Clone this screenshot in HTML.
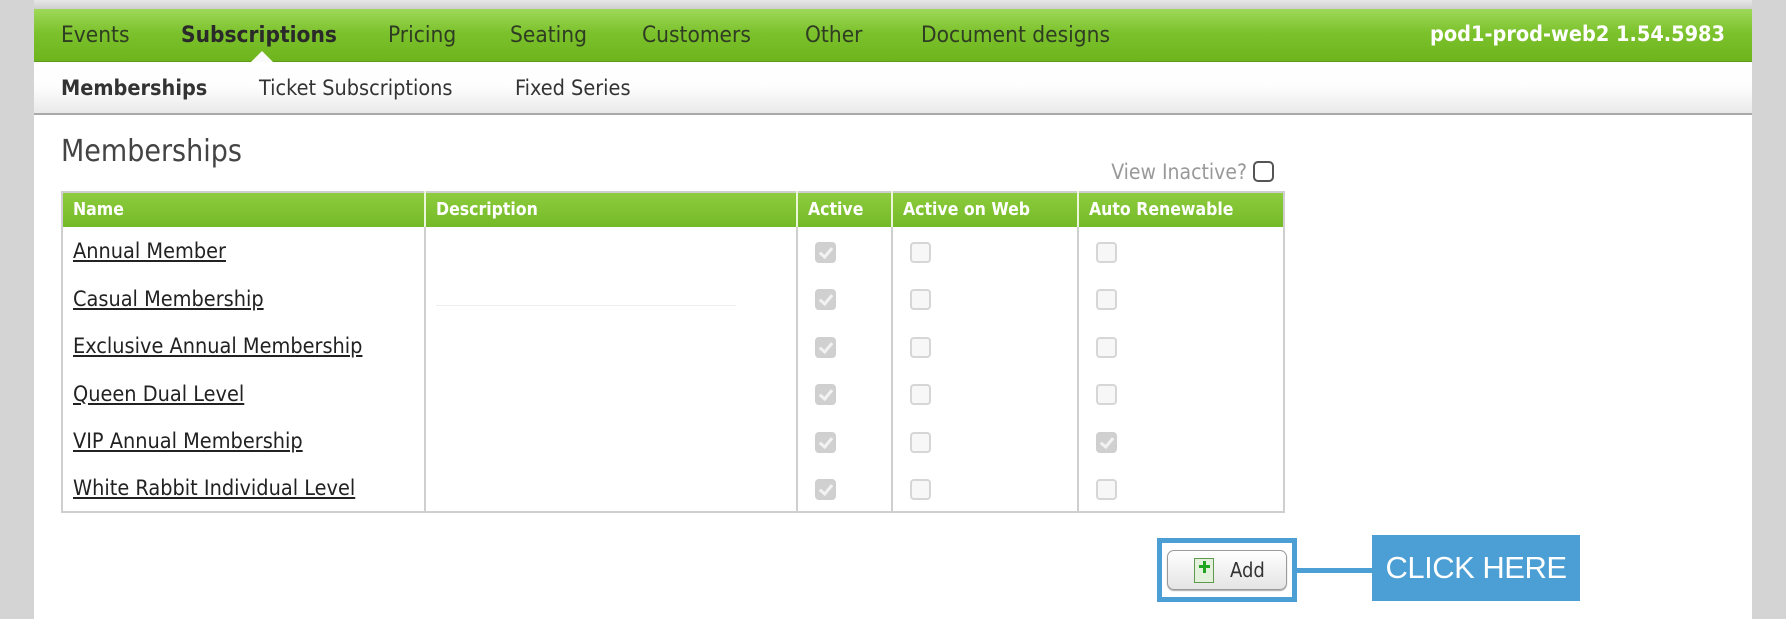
<!DOCTYPE html>
<html><head><meta charset="utf-8"><style>
*{margin:0;padding:0;box-sizing:border-box}
body{width:1786px;height:619px;overflow:hidden;background:#d4d4d4;font-family:"DejaVu Sans Condensed","Liberation Sans Narrow","Liberation Sans",sans-serif;position:relative}
.page{position:absolute;left:34px;top:0;width:1718px;height:619px;background:#fff}
.topbar{position:absolute;left:0;top:0;width:1718px;height:9px;background:linear-gradient(#e6e6e6,#cfcfcf)}
.nav{position:absolute;left:0;top:9px;width:1718px;height:53px;background:linear-gradient(#9fd85a,#7cc22c 45%,#6db41d);border-bottom:1px solid #5e9a1c}
.nav span{position:absolute;top:0;line-height:52px;font-size:22.5px;color:#2f3d23}
.nav b{position:absolute;top:0;line-height:52px;font-size:22.5px;color:#2a2a2a}
.nav .r{color:#fff;font-weight:bold;font-size:21.5px}
.tri{position:absolute;left:217px;top:51px;width:0;height:0;border-left:11px solid transparent;border-right:11px solid transparent;border-bottom:11px solid #fafafa}
.sub{position:absolute;left:0;top:62px;width:1718px;height:53px;background:linear-gradient(#fff,#fdfdfd 50%,#e9e9e9);border-bottom:2px solid #a9a9a9}
.sub span{position:absolute;top:0;line-height:54px;font-size:21.5px;color:#333}
h1{position:absolute;left:27px;top:135px;font-weight:normal;font-size:30px;color:#444;line-height:34px}
.vi{position:absolute;right:505px;top:160px;white-space:nowrap;font-size:21px;color:#999;line-height:24px}
.cbx{position:absolute;width:21px;height:21px;border:2px solid #555;border-radius:5px;background:#fff}
table{position:absolute;left:27px;top:191px;width:1224px;border-collapse:collapse;border:2px solid #cfcfcf}
th{height:35px;background:linear-gradient(#8dcc3e,#74b928);color:#fff;font-size:17.5px;text-align:left;padding-left:10px;border-left:2px solid #eaf5d9}
td{height:47.5px;border-left:2px solid #cfcfcf;font-size:21.5px;padding-left:10px;padding-top:2px}
td a{color:#222;text-decoration:underline}
.c{display:inline-block;width:21px;height:21px;border:2px solid #d6d6d6;border-radius:4px;background:#f7f7f7;vertical-align:middle;position:relative;margin-left:7px}
.c.k{background:#d0d0d0;border-color:#cfcfcf}
.c.k:after{content:"";position:absolute;left:5px;top:1px;width:5px;height:10px;border-right:3px solid #f2f2f2;border-bottom:3px solid #f2f2f2;transform:rotate(40deg)}
.box{position:absolute;left:1123px;top:538px;width:140px;height:64px;border:5px solid #4b9fd5}
.btn{position:absolute;left:5px;top:7px;width:120px;height:40px;border:1px solid #9a9a9a;border-radius:7px;background:linear-gradient(#fff,#e4e4e4);box-shadow:0 1px 1px #aaa;font-size:20px;color:#333;line-height:38px;padding-left:62px}
.doc{position:absolute;left:26px;top:7px;width:20px;height:25px;background:#e3f1dc;border:1px solid #5f9a4c}
.doc:before{content:"";position:absolute;left:8px;top:2px;width:3px;height:12px;background:#1fa51f}
.doc:after{content:"";position:absolute;left:4px;top:6px;width:11px;height:3px;background:#1fa51f}
.line{position:absolute;left:1263px;top:568px;width:75px;height:5px;background:#4b9fd5}
.ch{position:absolute;left:1338px;top:535px;width:208px;height:66px;background:#4b9fd5;color:#fff;font-size:31px;line-height:66px;text-align:center;font-family:"Liberation Sans",sans-serif;letter-spacing:-0.5px}
</style></head><body>
<div class="page">
<div class="topbar"></div>
<div class="nav">
<span style="left:27px">Events</span>
<b style="left:147px">Subscriptions</b>
<span style="left:354px">Pricing</span>
<span style="left:476px">Seating</span>
<span style="left:608px">Customers</span>
<span style="left:771px">Other</span>
<span style="left:887px">Document designs</span>
<span class="r" style="left:1396px">pod1-prod-web2 1.54.5983</span>
</div>
<div class="sub">
<span style="left:27px;font-weight:bold">Memberships</span>
<span style="left:225px">Ticket Subscriptions</span>
<span style="left:481px">Fixed Series</span>
</div>
<div class="tri"></div>
<h1>Memberships</h1>
<div class="vi">View Inactive?</div>
<div class="cbx" style="left:1219px;top:161px"></div>
<table>
<tr><th style="width:363px;border-left:none">Name</th><th style="width:372px">Description</th><th style="width:95px">Active</th><th style="width:186px">Active on Web</th><th>Auto Renewable</th></tr>
<tr><td style="border-left:none"><a>Annual Member</a></td><td></td><td><i class="c k"></i></td><td><i class="c"></i></td><td><i class="c"></i></td></tr>
<tr><td style="border-left:none"><a>Casual Membership</a></td><td><div style="height:1px;width:300px;background:#eee;margin-top:12px"></div></td><td><i class="c k"></i></td><td><i class="c"></i></td><td><i class="c"></i></td></tr>
<tr><td style="border-left:none"><a>Exclusive Annual Membership</a></td><td></td><td><i class="c k"></i></td><td><i class="c"></i></td><td><i class="c"></i></td></tr>
<tr><td style="border-left:none"><a>Queen Dual Level</a></td><td></td><td><i class="c k"></i></td><td><i class="c"></i></td><td><i class="c"></i></td></tr>
<tr><td style="border-left:none"><a>VIP Annual Membership</a></td><td></td><td><i class="c k"></i></td><td><i class="c"></i></td><td><i class="c k"></i></td></tr>
<tr><td style="border-left:none"><a>White Rabbit Individual Level</a></td><td></td><td><i class="c k"></i></td><td><i class="c"></i></td><td><i class="c"></i></td></tr>
</table>
<div class="box"><div class="btn"><div class="doc"></div>Add</div></div>
<div class="line"></div>
<div class="ch">CLICK HERE</div>
</div>
</body></html>
